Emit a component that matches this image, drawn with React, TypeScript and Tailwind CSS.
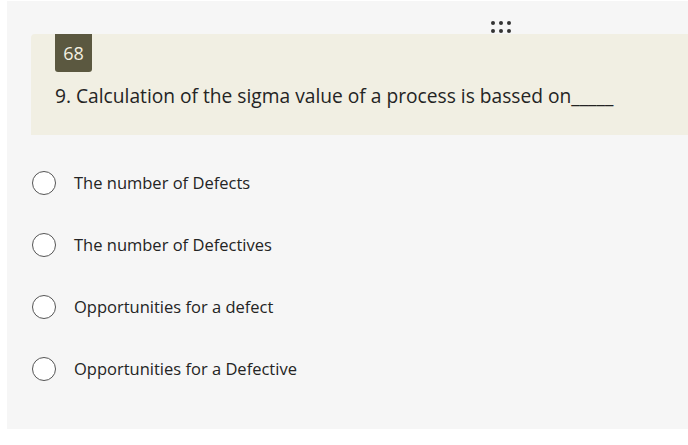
import React from "react";

const options = [
  "The number of Defects",
  "The number of Defectives",
  "Opportunities for a defect",
  "Opportunities for a Defective",
];

function DragHandle() {
  return (
    <div className="grid grid-cols-3 gap-x-[4px] gap-y-[4px]">
      {Array.from({ length: 6 }).map((_, i) => (
        <span key={i} className="block h-[4px] w-[4px] rounded-full bg-[#333333]" />
      ))}
    </div>
  );
}

export default function App() {
  return (
    <div
      className="h-[445px] w-[688px] overflow-hidden bg-white pl-[7px] pt-px"
      style={{ fontFamily: '"Open Sans", "Noto Sans", sans-serif' }}
    >
      <div className="h-[428px] w-[1000px] bg-[#f6f6f6]">
        {/* header with drag handle */}
        <div className="flex h-[33px] items-end pb-[1px] pl-[484px]">
          <DragHandle />
        </div>

        {/* question panel */}
        <div className="ml-[24px] h-[101px] rounded-tl-[4px] bg-[#f1efe3] pl-[24px]">
          <div className="flex h-[38px] w-[37px] items-center justify-center rounded-b-[3px] bg-[#5b5840] text-[18px] text-[#f4f0e2]">
            68
          </div>
          <div className="mt-[10px] text-[19.2px] leading-[28px] text-[#242424]">
            9. Calculation of the sigma value of a process is bassed on_____
          </div>
        </div>

        {/* options */}
        <div className="pt-[17px]">
          {options.map((opt) => (
            <label key={opt} className="flex h-[62px] items-center gap-[18px] pl-[25px]">
              <span className="block h-[24px] w-[24px] rounded-full border-[1.5px] border-[#555555] bg-white" />
              <span className="text-[16.5px] text-[#242424]">{opt}</span>
            </label>
          ))}
        </div>
      </div>
    </div>
  );
}
